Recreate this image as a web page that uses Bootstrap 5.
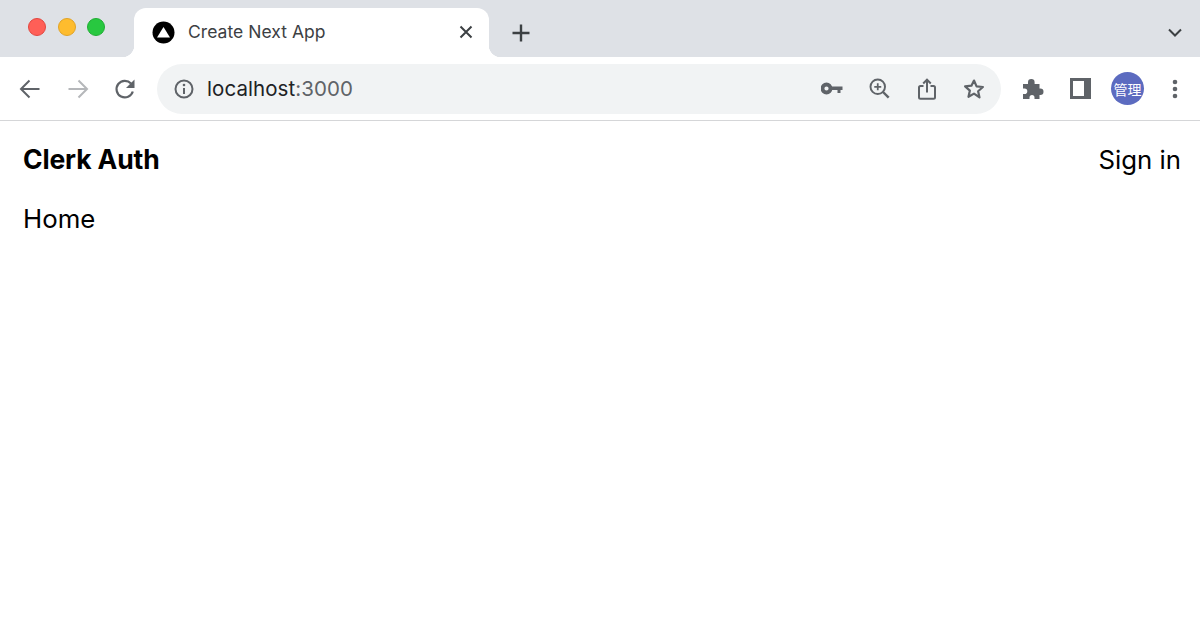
<!DOCTYPE html>
<html lang="en">
<head>
<meta charset="utf-8">
<title>Create Next App</title>
<meta name="viewport" content="width=device-width,initial-scale=1">
<link href="https://cdn.jsdelivr.net/npm/bootstrap@5.3.2/dist/css/bootstrap.min.css" rel="stylesheet">
<style>
  html, body    { height:100%; }
  body          { font-family:Inter,"Liberation Sans",sans-serif; color:#000; background:#fff; overflow:hidden; }
  svg           { display:block; flex:none; }

  /* ───── browser chrome ───── */
  .tab-strip    { height:57px; background:#dee1e6; padding-top:8px; }
  .traffic      { width:134px; padding:10px 0 0 28px; gap:11.5px; height:49px; }
  .light        { width:18px; height:18px; border-radius:50%; }
  .light-red    { background:#ff5f57; border:1px solid #e2463f; }
  .light-amber  { background:#febc2e; border:1px solid #e1a325; }
  .light-green  { background:#28c840; border:1px solid #1fae33; }
  .page-tab     { position:relative; width:355px; height:49px; background:#fff; border-radius:12px 12px 0 0; padding:0 16px 1px 18px; }
  .page-tab::before,
  .page-tab::after { content:""; position:absolute; bottom:0; width:12px; height:12px; background:radial-gradient(circle at 0 0,#dee1e6 12px,#fff 12.5px); }
  .page-tab::before { left:-12px; }
  .page-tab::after  { right:-12px; background:radial-gradient(circle at 100% 0,#dee1e6 12px,#fff 12.5px); }
  .tab-title    { font-size:17.5px; color:#3c4043; margin-left:13px; padding-top:1px; letter-spacing:.04px; }
  .strip-plus   { margin-left:23px; }
  .strip-chevron{ margin-right:18px; padding-bottom:1px; }

  .tool-bar     { height:64px; border-bottom:1px solid #d5d6d8; padding-left:19px; }
  .nav-icons    { width:138px; gap:25.5px; }
  .omni-box     { width:844px; height:50px; background:#f1f3f4; border-radius:25px; padding:0 15px 0 16px; }
  .omni-host    { font-size:20.5px; margin-left:12px; padding-top:1px; color:#202124; letter-spacing:.07px; }
  .omni-port    { color:#5f6368; }
  .omni-icons   { gap:23.5px; }
  .icon-slot    { width:24px; height:24px; }
  .ext-icons    { padding-left:20px; }
  .ext-panel    { margin-left:23px; }
  .avatar       { width:33px; height:33px; margin-left:19px; border-radius:50%; background:#5c6bc0; color:#fff; font:14px "Noto Sans CJK SC","Noto Sans CJK JP",sans-serif; }
  .ext-menu     { margin-left:19px; }

  /* ───── page ───── */
  .site-head    { padding:21px 19px 0 23px; line-height:35px; }
  .site-brand   { font-size:26.5px; font-weight:700; letter-spacing:-.15px; }
  .site-link    { font-size:25.8px; color:#000; text-decoration:none; }
  .site-main    { padding:24px 23px 0; font-size:25.8px; line-height:35px; }
</style>
</head>
<body>

<!-- ───── Tab strip ───── -->
<div class="tab-strip d-flex align-items-stretch">
  <div class="traffic d-flex align-items-start flex-shrink-0">
    <span class="light light-red"></span>
    <span class="light light-amber"></span>
    <span class="light light-green"></span>
  </div>
  <div class="page-tab d-flex align-items-center flex-shrink-0">
    <svg width="23" height="23" viewBox="0 0 23 23"><circle cx="11.5" cy="11.5" r="11" fill="#000"/><path d="M11.5 6 18 16.5H5z" fill="#fff"/></svg>
    <span class="tab-title flex-grow-1">Create Next App</span>
    <svg width="14" height="14" viewBox="0 0 14 14"><path d="M1.5 1.5l11 11M12.5 1.5l-11 11" stroke="#3c4043" stroke-width="2" fill="none"/></svg>
  </div>
  <div class="strip-plus d-flex align-items-center">
    <svg width="18" height="18" viewBox="0 0 18 18"><path d="M9 .5v17M.5 9h17" stroke="#3c4043" stroke-width="2.4" fill="none"/></svg>
  </div>
  <div class="strip-chevron d-flex align-items-center ms-auto">
    <svg width="14" height="9" viewBox="0 0 14 9"><path d="M1 1.5l6 6 6-6" stroke="#3c4043" stroke-width="2" fill="none"/></svg>
  </div>
</div>

<!-- ───── Toolbar ───── -->
<div class="tool-bar d-flex align-items-center">
  <div class="nav-icons d-flex align-items-center flex-shrink-0">
    <svg width="22" height="20" viewBox="0 0 22 20"><path d="M20.500 10H2M10.500 1.500 2 10l8.500 8.500" stroke="#5f6368" stroke-width="2" fill="none"/></svg>
    <svg width="22" height="20" viewBox="0 0 22 20"><path d="M1.500 10H20M11.500 1.500 20 10l-8.500 8.500" stroke="#b5b7ba" stroke-width="2" fill="none"/></svg>
    <svg width="22" height="22" viewBox="0 0 22 22"><path d="M18.800 13.500A8.300 8.300 0 1 1 17 5.500" stroke="#5f6368" stroke-width="2.200" fill="none"/><path d="M20.500 1.500v8.500H12z" fill="#5f6368"/></svg>
  </div>
  <div class="omni-box d-flex align-items-center flex-shrink-0">
    <svg width="22" height="22" viewBox="0 0 22 22"><circle cx="11" cy="11" r="8.500" stroke="#5f6368" stroke-width="2" fill="none"/><path d="M11 10v6" stroke="#5f6368" stroke-width="2"/><circle cx="11" cy="7" r="1.300" fill="#5f6368"/></svg>
    <span class="omni-host flex-grow-1">localhost<span class="omni-port">:3000</span></span>
    <div class="omni-icons d-flex align-items-center">
      <div class="icon-slot d-flex align-items-center justify-content-center">
        <svg width="22" height="13" viewBox="0 0 22 13"><circle cx="5.500" cy="6.500" r="4" stroke="#5f6368" stroke-width="3.800" fill="none"/><path d="M9 4.500h12.500v3.600h-2v3h-3v-3H9z" fill="#5f6368"/></svg>
      </div>
      <div class="icon-slot d-flex align-items-center justify-content-center">
        <svg width="21" height="21" viewBox="0 0 24 24"><circle cx="10" cy="10" r="8.300" stroke="#5f6368" stroke-width="2.200" fill="none"/><path d="M10 6v8M6 10h8" stroke="#5f6368" stroke-width="2"/><path d="M16 16l6.500 6.500" stroke="#5f6368" stroke-width="2.800"/></svg>
      </div>
      <div class="icon-slot d-flex align-items-center justify-content-center">
        <svg width="18" height="22" viewBox="0 0 18 22"><path d="M5.500 8H2.500A1.500 1.500 0 0 0 1 9.500v9.800A1.500 1.500 0 0 0 2.500 20.800h13a1.500 1.500 0 0 0 1.500-1.500V9.500A1.500 1.500 0 0 0 15.500 8h-3" stroke="#5f6368" stroke-width="2" fill="none"/><path d="M9 14.500V2M5.200 5.500 9 1.700l3.800 3.800" stroke="#5f6368" stroke-width="2" fill="none"/></svg>
      </div>
      <div class="icon-slot d-flex align-items-center justify-content-center">
        <svg width="22" height="22" viewBox="0 0 24 24"><path d="M12 2.800l2.800 6.300 6.900.7-5.200 4.600 1.500 6.800L12 17l-6 3.500 1.500-6.800-5.200-4.600 6.900-.7z" stroke="#5f6368" stroke-width="2.400" stroke-linejoin="round" fill="none"/></svg>
      </div>
    </div>
  </div>
  <div class="ext-icons d-flex align-items-center flex-shrink-0">
    <div class="icon-slot d-flex align-items-center justify-content-center">
      <svg width="22" height="22" viewBox="0 0 22 22"><path d="M1 6h5V4.300a3.300 3.300 0 0 1 6.600 0V6H17.500v4.500h.8a3.200 3.200 0 0 1 0 6.400h-.8V21h-5v-1.500a2.500 2.500 0 0 0-5 0V21H1v-5h1.500a2.800 2.800 0 0 0 0-5.600H1z" fill="#5f6368"/></svg>
    </div>
    <div class="ext-panel icon-slot d-flex align-items-center justify-content-center">
      <svg width="21" height="21" viewBox="0 0 21 21"><path fill-rule="evenodd" d="M0 0h21v21H0zM3 3v15h11V3z" fill="#5f6368"/></svg>
    </div>
    <div class="avatar d-flex align-items-center justify-content-center flex-shrink-0">管理</div>
    <div class="ext-menu icon-slot d-flex align-items-center justify-content-center">
      <svg width="6" height="20" viewBox="0 0 6 20"><circle cx="3" cy="3" r="2.300" fill="#5f6368"/><circle cx="3" cy="10" r="2.300" fill="#5f6368"/><circle cx="3" cy="17" r="2.300" fill="#5f6368"/></svg>
    </div>
  </div>
</div>

<!-- ───── Page ───── -->
<header class="site-head d-flex justify-content-between align-items-baseline">
  <span class="site-brand">Clerk Auth</span>
  <a class="site-link" href="#">Sign in</a>
</header>
<main class="site-main">Home</main>

<script src="https://cdn.jsdelivr.net/npm/bootstrap@5.3.2/dist/js/bootstrap.bundle.min.js"></script>
</body>
</html>
